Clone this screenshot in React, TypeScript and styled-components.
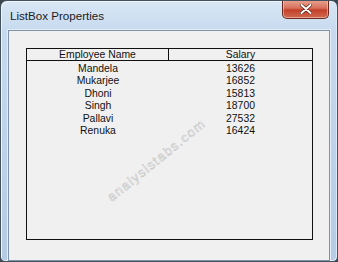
import styled, { createGlobalStyle } from 'styled-components';

const GlobalStyle = createGlobalStyle`
  html, body {
    margin: 0;
    padding: 0;
    background: #3c4650;
  }
  * {
    box-sizing: border-box;
  }
`;

type Employee = {
  name: string;
  salary: number;
};

const employees: Employee[] = [
  { name: 'Mandela', salary: 13626 },
  { name: 'Mukarjee', salary: 16852 },
  { name: 'Dhoni', salary: 15813 },
  { name: 'Singh', salary: 18700 },
  { name: 'Pallavi', salary: 27532 },
  { name: 'Renuka', salary: 16424 },
];

const Window = styled.div`
  width: 338px;
  height: 262px;
  display: flex;
  flex-direction: column;
  border: 1px solid #44515e;
  border-radius: 7px 7px 5px 5px;
  background: linear-gradient(180deg, #d9e7f5 0%, #c6d9ee 12%, #bcd2ea 60%, #b4cbe3 100%);
  box-shadow: inset 1px 1px 0 #eef5fc, inset -1px -1px 0 #dfeaf6;
  overflow: hidden;
`;

const TitleBar = styled.div`
  height: 29px;
  display: flex;
  align-items: flex-start;
  justify-content: space-between;
  padding: 0 8px 0 9px;
`;

const Title = styled.span`
  margin-top: 8px;
  font-family: 'Liberation Sans', Arial, sans-serif;
  font-size: 11.6px;
  color: #1b1b1b;
`;

const CloseButton = styled.div`
  width: 47px;
  height: 19px;
  margin-top: -1px;
  display: flex;
  align-items: center;
  justify-content: center;
  border: 1px solid #6a2a22;
  border-top: none;
  border-radius: 0 0 5px 5px;
  background: linear-gradient(180deg, #e8a593 0%, #d7705a 45%, #c4402a 55%, #d06a50 100%);
  box-shadow: inset 0 0 0 1px rgba(255, 220, 210, 0.5);
`;

const Client = styled.div`
  flex: 1;
  margin: 0 7px 0 7px;
  padding: 17px 16px 20px 17px;
  background: #f0f0f0;
  border: 1px solid #7f93a8;
  box-shadow: 0 0 0 1px #e4edf7;
  display: flex;
`;

const ListBox = styled.div`
  position: relative;
  flex: 1;
  border: 1px solid #111;
  background: #f0f0f0;
  overflow: hidden;
  font-family: 'Liberation Sans', Arial, sans-serif;
  font-size: 10.4px;
  color: #111;
`;

const Row = styled.div<{ $header?: boolean }>`
  display: grid;
  grid-template-columns: 142px 1fr;
  height: ${(p) => (p.$header ? '12px' : '12.4px')};
  line-height: ${(p) => (p.$header ? '11px' : '12.4px')};
  border-bottom: ${(p) => (p.$header ? '1px solid #111' : 'none')};
  margin-bottom: ${(p) => (p.$header ? '2px' : '0')};
`;

const Cell = styled.div<{ $divider?: boolean }>`
  text-align: center;
  border-right: ${(p) => (p.$divider ? '1px solid #111' : 'none')};
  white-space: nowrap;
`;

const Watermark = styled.div`
  position: absolute;
  left: 82px;
  top: 142px;
  transform: rotate(-39deg);
  transform-origin: left center;
  font-family: 'Liberation Sans', Arial, sans-serif;
  font-size: 13px;
  letter-spacing: 1.4px;
  color: #f5f5f5;
  -webkit-text-stroke: 0.5px #c2c2c2;
  pointer-events: none;
  white-space: nowrap;
`;

function CloseIcon() {
  return (
    <svg width="12" height="10" viewBox="0 0 12 10">
      <path d="M1.5 1 L10.5 9 M10.5 1 L1.5 9" stroke="#5a1e16" strokeWidth="3.4" strokeLinecap="round" />
      <path d="M1.5 1 L10.5 9 M10.5 1 L1.5 9" stroke="#fff" strokeWidth="2" strokeLinecap="round" />
    </svg>
  );
}

export default function App() {
  return (
    <>
      <GlobalStyle />
      <Window>
        <TitleBar>
          <Title>ListBox Properties</Title>
          <CloseButton>
            <CloseIcon />
          </CloseButton>
        </TitleBar>
        <Client>
          <ListBox>
            <Row $header>
              <Cell $divider>Employee Name</Cell>
              <Cell>Salary</Cell>
            </Row>
            {employees.map((e) => (
              <Row key={e.name}>
                <Cell>{e.name}</Cell>
                <Cell>{e.salary}</Cell>
              </Row>
            ))}
            <Watermark>analysistabs.com</Watermark>
          </ListBox>
        </Client>
      </Window>
    </>
  );
}
